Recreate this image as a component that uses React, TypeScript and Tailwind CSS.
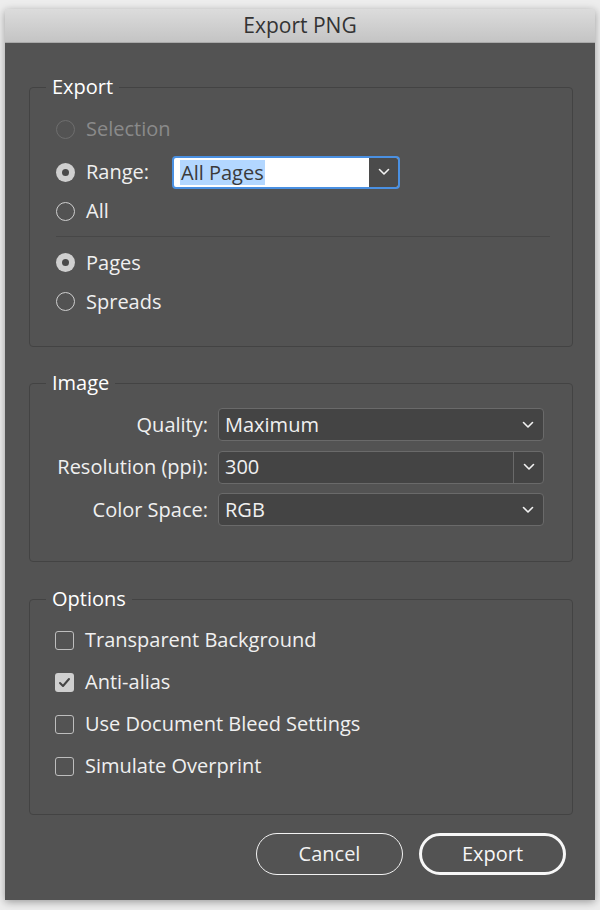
import React from "react";

const font = { fontFamily: '"Open Sans", "Noto Sans", sans-serif' };

function Chevron() {
  return (
    <svg width="12" height="8" viewBox="0 0 12 8" fill="none" className="shrink-0">
      <path d="M1.5 1.5 L6 6 L10.5 1.5" stroke="#f2f2f2" strokeWidth="1.6" strokeLinecap="round" strokeLinejoin="round" />
    </svg>
  );
}

function Radio({ checked, disabled, label }: { checked?: boolean; disabled?: boolean; label: string }) {
  return (
    <div className="flex items-center gap-[11px]">
      {checked ? (
        <span className="w-[19px] h-[19px] rounded-full bg-[#cfcfcf] flex items-center justify-center">
          <span className="w-[7px] h-[7px] rounded-full bg-[#4a4a4a]" />
        </span>
      ) : (
        <span
          className={`w-[19px] h-[19px] rounded-full border-[1.5px] ${disabled ? "border-[#6e6e6e]" : "border-[#cfcfcf]"}`}
        />
      )}
      <span className={`text-[20px] leading-none ${disabled ? "text-[#8a8a8a]" : "text-[#f0f0f0]"}`}>{label}</span>
    </div>
  );
}

function Checkbox({ checked, label }: { checked?: boolean; label: string }) {
  return (
    <div className="h-[42px] flex items-center gap-[11px]">
      {checked ? (
        <span className="w-[19px] h-[19px] rounded-[3px] bg-[#cfcfcf] flex items-center justify-center">
          <svg width="13" height="11" viewBox="0 0 13 11" fill="none">
            <path d="M2 6 L5 9 L11 2" stroke="#444" strokeWidth="2" strokeLinecap="round" strokeLinejoin="round" />
          </svg>
        </span>
      ) : (
        <span className="w-[19px] h-[19px] rounded-[3px] border-[1.5px] border-[#bdbdbd]" />
      )}
      <span className="text-[20px] leading-none text-[#f0f0f0]">{label}</span>
    </div>
  );
}

function Select({ value, split }: { value: string; split?: boolean }) {
  return (
    <div className="h-[33px] rounded-[4px] border border-[#6a6a6a] bg-[#444444] flex items-stretch">
      <div className="flex-1 flex items-center pl-[6px] text-[20px] text-[#f0f0f0]">{value}</div>
      <div className={`w-[30px] flex items-center justify-center ${split ? "border-l border-[#6a6a6a]" : ""}`}>
        <Chevron />
      </div>
    </div>
  );
}

function Group({ title, children, className }: { title: string; children: React.ReactNode; className?: string }) {
  return (
    <fieldset className={`border border-[#434343] rounded-[4px] ${className ?? ""}`}>
      <legend className="ml-[16px] px-[6px] h-[24px] leading-[24px] text-[20px] text-white">{title}</legend>
      {children}
    </fieldset>
  );
}

export default function App() {
  return (
    <div className="w-[600px] h-[910px] bg-[#ededed] pt-[9px] pl-[5px]" style={font}>
      <div className="w-[590px] h-[891px] bg-[#535353] flex flex-col shadow-[0_2px_8px_rgba(0,0,0,0.35)]">
        {/* Title bar */}
        <div className="h-[34px] bg-gradient-to-b from-[#dcdcdc] to-[#c4c4c4] border-b border-[#a9a9a9] flex items-center justify-center">
          <span className="text-[21px] text-[#333]">Export PNG</span>
        </div>

        {/* Body */}
        <div className="flex-1 flex flex-col pt-[32px] pl-[24px] pr-[22px]">
          <Group title="Export" className="h-[272px]">
            <div className="pt-[11px] pl-[26px] pr-[22px]">
              <div className="h-[38px] flex items-center">
                <Radio disabled label="Selection" />
              </div>
              <div className="h-[48px] flex items-center">
                <div className="w-[116px]">
                  <Radio checked label="Range:" />
                </div>
                <div className="w-[228px] h-[33px] rounded-[4px] border-2 border-[#4a90e2] bg-white flex items-stretch overflow-hidden">
                  <div className="flex-1 flex items-center pl-[6px]">
                    <span className="bg-[#b3d7ff] text-[#3a3a3a] text-[20px] leading-[25px] px-[1px]">All Pages</span>
                  </div>
                  <div className="w-[29px] bg-[#4b4b4b] flex items-center justify-center">
                    <Chevron />
                  </div>
                </div>
              </div>
              <div className="h-[30px] flex items-center">
                <Radio label="All" />
              </div>
              <div className="mt-[10px] h-px bg-[#474747]" />
              <div className="h-[39px] mt-[6px] flex items-center">
                <Radio checked label="Pages" />
              </div>
              <div className="h-[39px] flex items-center">
                <Radio label="Spreads" />
              </div>
            </div>
          </Group>

          <Group title="Image" className="mt-[24px] h-[191px]">
            <div className="pt-[13px] pr-[28px] grid grid-cols-[178px_1fr] gap-x-[10px] gap-y-[9.5px] items-center">
              <span className="text-right text-[20px] text-[#f0f0f0]">Quality:</span>
              <Select value="Maximum" />
              <span className="text-right text-[20px] text-[#f0f0f0]">Resolution (ppi):</span>
              <Select value="300" split />
              <span className="text-right text-[20px] text-[#f0f0f0]">Color Space:</span>
              <Select value="RGB" />
            </div>
          </Group>

          <Group title="Options" className="mt-[25px] h-[228px]">
            <div className="pt-[8px] pl-[25px]">
              <Checkbox label="Transparent Background" />
              <Checkbox checked label="Anti-alias" />
              <Checkbox label="Use Document Bleed Settings" />
              <Checkbox label="Simulate Overprint" />
            </div>
          </Group>

          <div className="mt-[18px] flex justify-end gap-[16px] pr-[7px]">
            <button className="w-[147px] h-[42px] rounded-full border-[1.5px] border-[#f2f2f2] text-[20px] text-[#f2f2f2]">
              Cancel
            </button>
            <button className="w-[147px] h-[42px] rounded-full border-[3px] border-[#f7f7f7] text-[20px] text-[#f7f7f7]">
              Export
            </button>
          </div>
        </div>
      </div>
    </div>
  );
}
